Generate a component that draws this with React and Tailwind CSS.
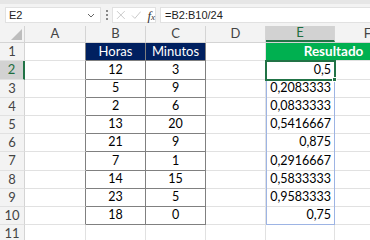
import React from "react"

const cols = [
  { key: "A", w: "w-[61px]" },
  { key: "B", w: "w-[60px]" },
  { key: "C", w: "w-[60px]" },
  { key: "D", w: "w-[60px]" },
  { key: "E", w: "w-[69px]" },
  { key: "F", w: "w-[66px]" },
]

const horas = [12, 5, 2, 13, 21, 7, 14, 23, 18]
const minutos = [3, 9, 6, 20, 9, 1, 15, 5, 0]
const resultado = ["0,5", "0,2083333", "0,0833333", "0,5416667", "0,875", "0,2916667", "0,5833333", "0,9583333", "0,75"]
const heights = ["h-[18px]", "h-[19px]", "h-[18px]", "h-[18px]", "h-[18px]", "h-[18px]", "h-[19px]", "h-[18px]", "h-[18px]", "h-[18px]", "h-[18px]"]

const FormulaBar = () => (
  <div className="h-[26px] bg-[#f3f3f3] border-t-[4px] border-[#e6e6e6] flex items-start pt-[3px] pl-[5px] text-[11px] text-[#222] font-['Liberation_Sans',sans-serif]">
    <div className="w-[96px] h-[16px] bg-white border border-[#e1e1e1] flex items-center justify-between pl-[3px] pr-[5px]">
      <span>E2</span>
      <svg width="8" height="5" viewBox="0 0 8 5" className="text-[#666]">
        <path d="M1 1l3 3 3-3" fill="none" stroke="currentColor" strokeWidth="1" />
      </svg>
    </div>
    <div className="w-[11px] h-[16px] flex flex-col items-center justify-center gap-[2px]">
      <span className="w-[2px] h-[2px] bg-[#888]" />
      <span className="w-[2px] h-[2px] bg-[#888]" />
      <span className="w-[2px] h-[2px] bg-[#888]" />
    </div>
    <div className="w-[44px] h-[16px] bg-white border border-[#e1e1e1] flex items-center pl-[3px] gap-[5px]">
      <svg width="10" height="10" viewBox="0 0 10 10">
        <path d="M1 1l8 8M9 1l-8 8" stroke="#c8c8c8" strokeWidth="1" />
      </svg>
      <svg width="11" height="10" viewBox="0 0 11 10">
        <path d="M1 5.5l3 3L10 1.5" fill="none" stroke="#c8c8c8" strokeWidth="1" />
      </svg>
      <span className="font-['Liberation_Serif',serif] italic text-[13px] text-[#333] leading-none ml-[1px]">
        f<span className="text-[9px]">x</span>
      </span>
    </div>
    <div className="flex-1 ml-[4px] h-[16px] bg-white border border-[#e1e1e1] border-r-0 flex items-center pl-[4px]">
      =B2:B10/24
    </div>
  </div>
)

const ColumnHeaders = () => (
  <div className="flex h-[17px] bg-[#f3f3f3] border-b border-[#d4d4d4] text-[13px] text-[#444]">
    <div className="w-[25px] shrink-0 relative border-r border-[#d4d4d4]">
      <div className="absolute right-[2px] bottom-[2px] w-0 h-0 border-l-[11px] border-l-transparent border-b-[11px] border-b-[#bdbdbd]" />
    </div>
    {cols.map((c) => (
      <div
        key={c.key}
        className={`${c.w} shrink-0 flex items-center justify-center border-r border-[#d4d4d4] ${
          c.key === "E" ? "bg-[#d2d2d2] text-[#1e6e3f] border-b-2 border-b-[#217346]" : ""
        }`}
      >
        {c.key}
      </div>
    ))}
  </div>
)

const cellText = (col, r) => {
  if (r === 0) {
    if (col === "B") return "Horas"
    if (col === "C") return "Minutos"
    return ""
  }
  if (col === "B") return horas[r - 1] ?? ""
  if (col === "C") return minutos[r - 1] ?? ""
  if (col === "E") return resultado[r - 1] ?? ""
  return ""
}

const Row = ({ r }) => {
  const inTable = r <= 9
  return (
    <div className={`flex ${heights[r]} ${r === 0 ? "text-[13px]" : "text-[12.5px]"} text-black`}>
      <div
        className={`w-[25px] shrink-0 flex items-center justify-center text-[13px] border-b border-[#e1e1e1] ${
          r === 1 ? "bg-[#d2d2d2] text-[#1e6e3f] border-r-2 border-r-[#217346]" : "bg-[#f3f3f3] text-[#444] border-r border-r-[#d4d4d4]"
        }`}
      >
        {r + 1}
      </div>
      {cols.map((c) => {
        const txt = cellText(c.key, r)
        if (r === 0 && (c.key === "E" || c.key === "F")) {
          if (c.key === "F") return null
          return (
            <div
              key={c.key}
              className="w-[135px] shrink-0 bg-[#00b050] text-white text-[13.5px] font-bold flex items-center justify-center border-b border-[#e1e1e1]"
            >
              Resultado
            </div>
          )
        }
        const tableCell = inTable && (c.key === "B" || c.key === "C")
        let cls = "border-r border-b border-[#e1e1e1]"
        if (tableCell) {
          cls = r === 0 ? "bg-[#002060] text-white border-r border-r-[#7f7f7f] border-b border-b-[#7f7f7f]" : "border-r border-b border-[#808080]"
        }
        if (c.key === "A" && inTable) cls = "border-r border-r-[#808080] border-b border-b-[#e1e1e1]"
        const align = c.key === "E" ? "justify-end pr-[3px]" : "justify-center"
        return (
          <div key={c.key} className={`${c.w} shrink-0 flex items-center ${align} ${cls}`}>
            {txt}
          </div>
        )
      })}
    </div>
  )
}

export default function App() {
  return (
    <div className="w-[370px] h-[240px] overflow-hidden bg-white font-['Lato',sans-serif]">
      <FormulaBar />
      <ColumnHeaders />
      <div className="relative">
        {Array.from({ length: 11 }).map((_, r) => (
          <Row key={r} r={r} />
        ))}
        {/* spill range border */}
        <div className="absolute left-[266px] top-[18px] w-[69px] h-[164px] border border-[#9db4e4] pointer-events-none" />
        {/* active cell */}
        <div className="absolute left-[265px] top-[17px] w-[71px] h-[21px] border-2 border-[#217346] pointer-events-none">
          <div className="absolute -right-[3px] -bottom-[3px] w-[5px] h-[5px] bg-[#217346] border border-white" />
        </div>
      </div>
    </div>
  )
}
